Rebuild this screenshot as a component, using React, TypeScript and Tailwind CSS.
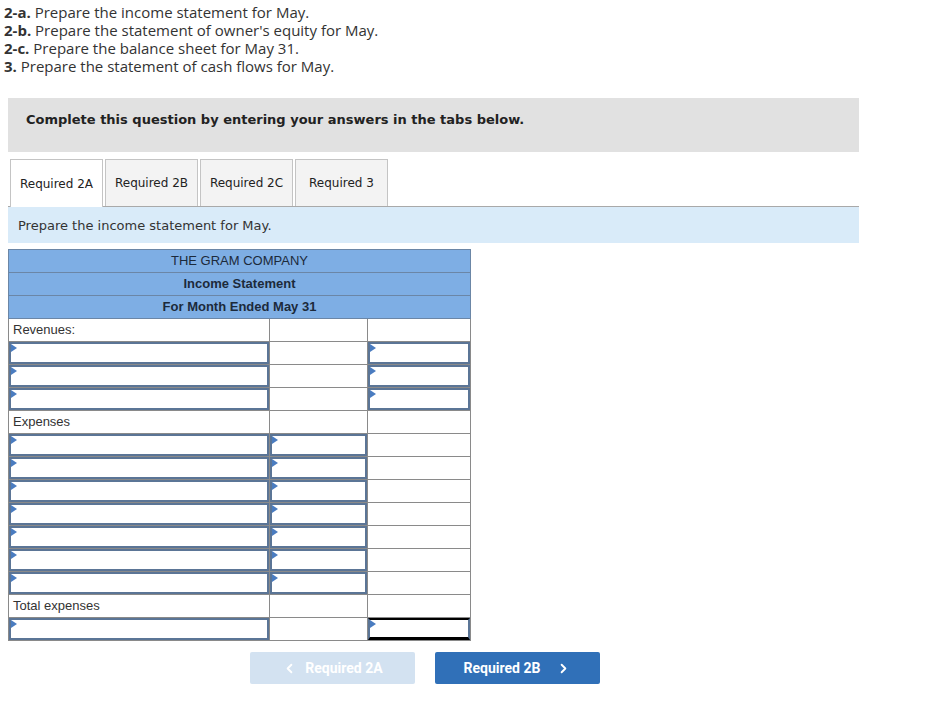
import { ChevronLeft, ChevronRight } from "lucide-react";

type Row =
  | { kind: "label"; text: string; c2?: string }
  | { kind: "input"; inputs: [boolean, boolean, boolean]; last?: boolean };

const rows: Row[] = [
  { kind: "label", text: "Revenues:" },
  { kind: "input", inputs: [true, false, true] },
  { kind: "input", inputs: [true, false, true] },
  { kind: "input", inputs: [true, false, true] },
  { kind: "label", text: "Expenses" },
  { kind: "input", inputs: [true, true, false] },
  { kind: "input", inputs: [true, true, false] },
  { kind: "input", inputs: [true, true, false] },
  { kind: "input", inputs: [true, true, false] },
  { kind: "input", inputs: [true, true, false] },
  { kind: "input", inputs: [true, true, false] },
  { kind: "input", inputs: [true, true, false] },
  { kind: "label", text: "Total expenses", c2: "sum" },
  { kind: "input", inputs: [true, false, true], last: true },
];

const tabs = ["Required 2A", "Required 2B", "Required 2C", "Required 3"];

function InputBox({ total }: { total?: boolean }) {
  return (
    <div
      className={
        "relative h-[22px] w-full border-2 bg-white " +
        (total
          ? "border-x-[#5b7596] border-t-black border-b-[3px] border-b-black border-b-double"
          : "border-[#5b7596]")
      }
    >
      <span className="absolute left-0 top-0 h-0 w-0 border-y-[4px] border-l-[6px] border-y-transparent border-l-[#4a7cc0]" />
    </div>
  );
}

export default function App() {
  return (
    <div className="min-h-[702px] bg-white text-[#333]">
      <div
        className="pl-1 pt-[3px] text-[15px] leading-[18px] text-[#333]"
        style={{ fontFamily: '"Open Sans", "Liberation Sans", sans-serif' }}
      >
        <p>
          <b className="font-bold">2-a.</b> Prepare the income statement for May.
        </p>
        <p>
          <b className="font-bold">2-b.</b> Prepare the statement of owner's equity for May.
        </p>
        <p>
          <b className="font-bold">2-c.</b> Prepare the balance sheet for May 31.
        </p>
        <p>
          <b className="font-bold">3.</b> Prepare the statement of cash flows for May.
        </p>
      </div>

      <div className="ml-2 w-[851px]" style={{ fontFamily: '"DejaVu Sans", Verdana, sans-serif' }}>
        <div className="mt-[23px] h-[54px] bg-[#e1e1e1] pl-[18px] pt-[14px] text-[13px] font-bold leading-[16px] text-[#222]">
          Complete this question by entering your answers in the tabs below.
        </div>

        <div className="mt-[7px] flex gap-[2px] pl-[2px]">
          {tabs.map((t, i) => (
            <div
              key={t}
              className={
                "relative z-10 flex h-[47px] w-[93px] items-center justify-center border border-b-0 border-[#c4c4c4] text-[12px] text-[#222] " +
                (i === 0 ? "-mb-px h-[48px] bg-white" : "bg-[#f3f3f3]")
              }
            >
              {t}
            </div>
          ))}
        </div>

        <div className="flex h-[37px] items-center border-t border-[#a9a9a9] bg-[#d9ebf9] pl-[10px] pt-px text-[13px] text-[#333]">
          Prepare the income statement for May.
        </div>

        <table
          className="mt-[6px] w-[462px] table-fixed border-collapse text-[13px]"
          style={{ fontFamily: '"Liberation Sans", Arial, sans-serif' }}
        >
          <colgroup>
            <col className="w-[261px]" />
            <col className="w-[98px]" />
            <col className="w-[103px]" />
          </colgroup>
          <tbody>
            {["THE GRAM COMPANY", "Income Statement", "For Month Ended May 31"].map((h, i) => (
              <tr key={h}>
                <td
                  colSpan={3}
                  className={
                    "h-[23px] border border-[#6b86a6] bg-[#7eaee4] p-0 text-center text-[#1c2a3b] " +
                    (i === 0 ? "font-normal" : "font-bold")
                  }
                >
                  {h}
                </td>
              </tr>
            ))}
            {rows.map((r, idx) =>
              r.kind === "label" ? (
                <tr key={idx}>
                  <td className="h-[23px] border border-[#8a8a8a] p-0 pl-[4px] text-[#333]">{r.text}</td>
                  <td
                    className={
                      "h-[23px] border border-[#8a8a8a] p-0 " + (r.c2 === "sum" ? "border-t-black" : "")
                    }
                  />
                  <td className="h-[23px] border border-[#8a8a8a] p-0" />
                </tr>
              ) : (
                <tr key={idx}>
                  {r.inputs.map((on, c) => (
                    <td key={c} className="h-[23px] border border-[#8a8a8a] p-0">
                      {on ? <InputBox total={r.last && c === 2} /> : null}
                    </td>
                  ))}
                </tr>
              )
            )}
          </tbody>
        </table>
      </div>

      <div
        className="mt-[11px] flex gap-5 pl-[250px] text-[14px] font-bold text-white"
        style={{ fontFamily: 'Roboto, "Liberation Sans", sans-serif' }}
      >
        <div className="flex h-8 w-[165px] items-center justify-center gap-2 rounded-[2px] bg-[#d3e2f1]">
          <ChevronLeft size={15} strokeWidth={3} />
          <span>Required 2A</span>
        </div>
        <div className="flex h-8 w-[165px] items-center justify-center gap-4 rounded-[2px] bg-[#3070b8]">
          <span>Required 2B</span>
          <ChevronRight size={15} strokeWidth={3} />
        </div>
      </div>
    </div>
  );
}
